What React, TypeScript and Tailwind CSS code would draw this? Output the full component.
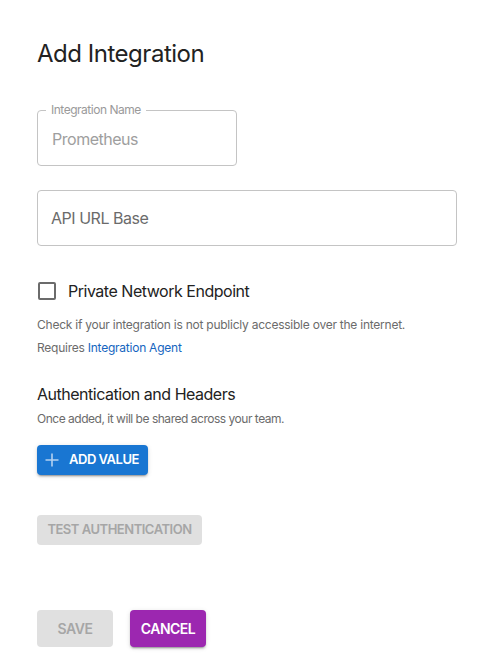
import React from "react";

export default function App() {
  return (
    <div
      className="w-[496px] h-[663px] bg-white text-[#222] pl-[37px] pr-[39px] pt-[38px] flex flex-col items-start tracking-[-0.03em]"
      style={{ fontFamily: "Inter, 'Noto Sans', sans-serif" }}
    >
      <h1 className="text-[24px] leading-[32px] font-normal text-[#222]">Add Integration</h1>

      <fieldset className="mt-[32px] w-[200px] h-[64px] border border-[#c4c4c4] rounded-[4px] px-[8px] m-0 min-w-0">
        <legend className="px-[5px] text-[12px] leading-[16px] text-[#9a9a9a]">Integration Name</legend>
        <div className="pl-[6px] pt-[11px] text-[16px] leading-[20px] text-[#9e9e9e]">Prometheus</div>
      </fieldset>

      <div className="mt-[24px] w-[420px] h-[56px] border border-[#c4c4c4] rounded-[4px] flex items-center pl-[13px] text-[16px] text-[#6b6b6b]">
        API URL Base
      </div>

      <label className="mt-[33px] flex items-center h-[24px] ml-[1px]">
        <span className="w-[18px] h-[18px] border-2 border-[#6b6b6b] rounded-[2px]" />
        <span className="ml-[12px] text-[16px] text-[#222]">Private Network Endpoint</span>
      </label>

      <p className="mt-[10px] text-[12px] leading-[23px] text-[#6b6b6b] tracking-[-0.02em]">
        Check if your integration is not publicly accessible over the internet.
      </p>
      <p className="text-[12px] leading-[23px] text-[#6b6b6b] tracking-[-0.02em]">
        Requires <span className="text-[#1565c0]">Integration Agent</span>
      </p>

      <h2 className="mt-[23px] text-[16px] leading-[24px] font-normal text-[#222]">Authentication and Headers</h2>
      <p className="mt-[3px] text-[12px] leading-[20px] text-[#6b6b6b]">Once added, it will be shared across your team.</p>

      <button className="mt-[16px] h-[30px] w-[111px] rounded-[4px] bg-[#1976d2] text-white flex items-center pl-[8px] shadow-[0_3px_1px_-2px_rgba(0,0,0,0.2),0_2px_2px_0_rgba(0,0,0,0.14),0_1px_5px_0_rgba(0,0,0,0.12)]">
        <svg width="14" height="14" viewBox="0 0 14 14">
          <path d="M7 0.5V13.5M0.5 7H13.5" stroke="#b3d1f1" strokeWidth="1.6" />
        </svg>
        <span className="ml-[10px] text-[13px] font-semibold">ADD VALUE</span>
      </button>

      <button className="mt-[40px] h-[30px] w-[165px] rounded-[4px] bg-[#e0e0e0] text-[#a6a6a6] text-[13px] font-semibold flex items-center justify-center">
        TEST AUTHENTICATION
      </button>

      <div className="mt-[65px] flex gap-[17px]">
        <button className="h-[37px] w-[76px] rounded-[4px] bg-[#e0e0e0] text-[#a6a6a6] text-[14px] font-semibold flex items-center justify-center">
          SAVE
        </button>
        <button className="h-[37px] w-[76px] rounded-[4px] bg-[#9c27b0] text-white text-[14px] font-semibold flex items-center justify-center shadow-[0_3px_1px_-2px_rgba(0,0,0,0.2),0_2px_2px_0_rgba(0,0,0,0.14),0_1px_5px_0_rgba(0,0,0,0.12)]">
          CANCEL
        </button>
      </div>
    </div>
  );
}
